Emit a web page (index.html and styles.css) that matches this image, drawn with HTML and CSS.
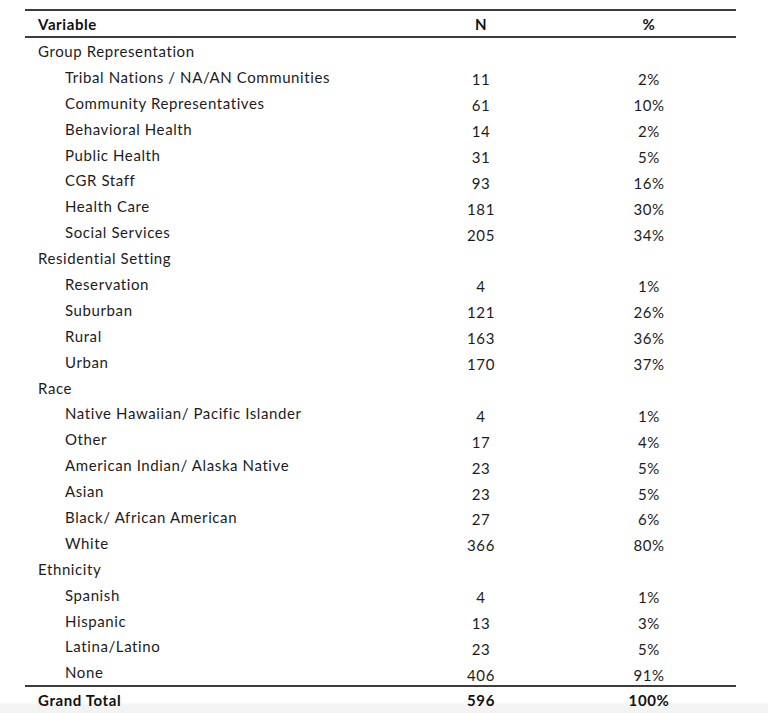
FILE: index.html
```html
<!DOCTYPE html>
<html lang="en">
<head>
    <meta charset="UTF-8">
    <meta name="viewport" content="width=device-width, initial-scale=1.0">
    <title>Respondent Characteristics</title>
    <link rel="stylesheet" href="styles.css">
</head>
<body>
    <div class="table">
        <div class="row head">
            <div class="cell label">Variable</div>
            <div class="cell num">N</div>
            <div class="cell num">%</div>
        </div>

        <div class="body">
            <div class="row group"><div class="cell label">Group Representation</div><div class="cell num"></div><div class="cell num"></div></div>
            <div class="row item"><div class="cell label">Tribal Nations / NA/AN Communities</div><div class="cell num">11</div><div class="cell num">2%</div></div>
            <div class="row item"><div class="cell label">Community Representatives</div><div class="cell num">61</div><div class="cell num">10%</div></div>
            <div class="row item"><div class="cell label">Behavioral Health</div><div class="cell num">14</div><div class="cell num">2%</div></div>
            <div class="row item"><div class="cell label">Public Health</div><div class="cell num">31</div><div class="cell num">5%</div></div>
            <div class="row item"><div class="cell label">CGR Staff</div><div class="cell num">93</div><div class="cell num">16%</div></div>
            <div class="row item"><div class="cell label">Health Care</div><div class="cell num">181</div><div class="cell num">30%</div></div>
            <div class="row item"><div class="cell label">Social Services</div><div class="cell num">205</div><div class="cell num">34%</div></div>

            <div class="row group"><div class="cell label">Residential Setting</div><div class="cell num"></div><div class="cell num"></div></div>
            <div class="row item"><div class="cell label">Reservation</div><div class="cell num">4</div><div class="cell num">1%</div></div>
            <div class="row item"><div class="cell label">Suburban</div><div class="cell num">121</div><div class="cell num">26%</div></div>
            <div class="row item"><div class="cell label">Rural</div><div class="cell num">163</div><div class="cell num">36%</div></div>
            <div class="row item"><div class="cell label">Urban</div><div class="cell num">170</div><div class="cell num">37%</div></div>

            <div class="row group"><div class="cell label">Race</div><div class="cell num"></div><div class="cell num"></div></div>
            <div class="row item"><div class="cell label">Native Hawaiian/ Pacific Islander</div><div class="cell num">4</div><div class="cell num">1%</div></div>
            <div class="row item"><div class="cell label">Other</div><div class="cell num">17</div><div class="cell num">4%</div></div>
            <div class="row item"><div class="cell label">American Indian/ Alaska Native</div><div class="cell num">23</div><div class="cell num">5%</div></div>
            <div class="row item"><div class="cell label">Asian</div><div class="cell num">23</div><div class="cell num">5%</div></div>
            <div class="row item"><div class="cell label">Black/ African American</div><div class="cell num">27</div><div class="cell num">6%</div></div>
            <div class="row item"><div class="cell label">White</div><div class="cell num">366</div><div class="cell num">80%</div></div>

            <div class="row group"><div class="cell label">Ethnicity</div><div class="cell num"></div><div class="cell num"></div></div>
            <div class="row item"><div class="cell label">Spanish</div><div class="cell num">4</div><div class="cell num">1%</div></div>
            <div class="row item"><div class="cell label">Hispanic</div><div class="cell num">13</div><div class="cell num">3%</div></div>
            <div class="row item"><div class="cell label">Latina/Latino</div><div class="cell num">23</div><div class="cell num">5%</div></div>
            <div class="row item"><div class="cell label">None</div><div class="cell num">406</div><div class="cell num">91%</div></div>
        </div>

        <div class="row total">
            <div class="cell label">Grand Total</div>
            <div class="cell num">596</div>
            <div class="cell num">100%</div>
        </div>
    </div>
</body>
</html>
```

FILE: styles.css
```css
* {
    margin: 0;
    padding: 0;
    box-sizing: border-box;
}

html {
    background: linear-gradient(to bottom, #ffffff 0, #ffffff 702px, #f3f3f3 705px);
    min-height: 100%;
}

body {
    font-family: Lato, "Open Sans", sans-serif;
    font-size: 15px;
    letter-spacing: 0.6px;
    color: #1c1c1c;
    height: 713px;
    overflow: hidden;
}

.table {
    margin: 9px 0 0 25px;
    width: 711px;
}

.row {
    display: grid;
    grid-template-columns: 375px 162px 174px;
    height: 25.9px;
    align-items: center;
}

.cell.label {
    padding-left: 13px;
}

.cell.num {
    text-align: center;
}

.head {
    height: 29px;
    padding-top: 1px;
    border-top: 2px solid #3d3d3d;
    border-bottom: 2px solid #3d3d3d;
    font-weight: 700;
    color: #111;
}

.item .cell.label {
    padding-left: 40px;
}

.item .cell.num {
    padding-top: 5px;
}

.total {
    height: 27px;
    border-top: 2px solid #3d3d3d;
    font-weight: 700;
    color: #111;
}
```
